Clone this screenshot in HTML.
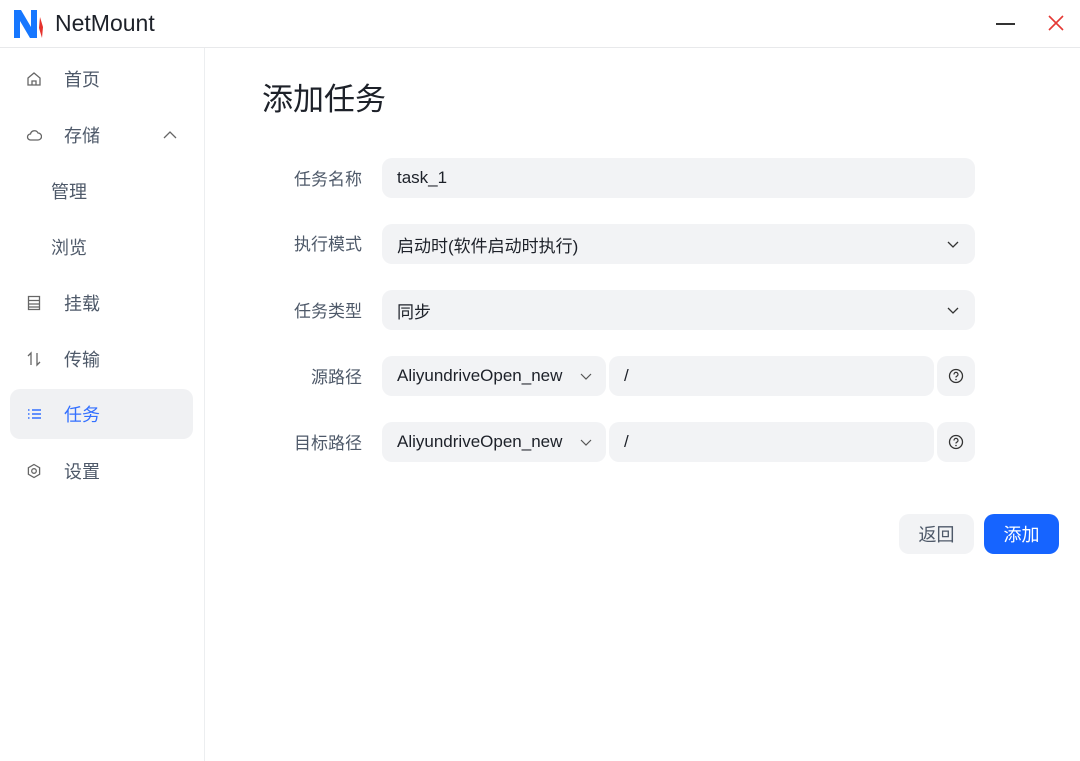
<!DOCTYPE html><html><head><meta charset="utf-8"><style>
*{box-sizing:border-box;margin:0;padding:0}
body{width:1080px;height:761px;background:#fff;font-family:"Liberation Sans","Noto Sans CJK SC",sans-serif;color:#1d2129;position:relative;overflow:hidden}
.hdr{position:absolute;left:0;top:0;width:1080px;height:48px;border-bottom:1px solid #e8e9eb}
.side{position:absolute;left:0;top:48px;width:205px;height:713px;border-right:1px solid #eceef0}
.it{position:absolute;left:10px;width:183px;height:50px;border-radius:10px;font-size:18px;color:#4e5969;display:flex;align-items:center}
.it .ic{position:absolute;left:16px;top:17px;width:16px;height:16px}
.it .t{position:absolute;left:54px}
.sel{background:#f0f1f3;color:#3370ff}
.lab{position:absolute;width:120px;left:242px;text-align:right;font-size:17px;color:#4e5969}
.box{position:absolute;height:40px;background:#f2f3f5;border-radius:10px;font-size:17px;display:flex;align-items:center;padding-left:15px;color:#1d2129}
.chev{position:absolute;right:16px;top:14px}
.btn{position:absolute;top:514px;width:75px;height:40px;border-radius:10px;font-size:18px;display:flex;align-items:center;justify-content:center}
</style></head><body>
<div class="hdr">
<svg style="position:absolute;left:13px;top:9px" width="34" height="30" viewBox="0 0 34 30"><path d="M1 1h7l10 17V1h6v28h-7L7 12v17H1z" fill="#1677ff"/><path d="M27 8l3 10-1 11-3-10z" fill="#e5322d"/></svg>
<div style="position:absolute;left:55px;top:10px;font-size:23px;color:#1d2129">NetMount</div>
<div style="position:absolute;left:996px;top:23px;width:19px;height:2px;background:#333"></div>
<svg style="position:absolute;left:1048px;top:15px" width="16" height="16"><path d="M1 1L15 15M15 1L1 15" stroke="#e53935" stroke-width="1.6"/></svg>
</div>
<div class="side">
<div class="it" style="top:6px"><svg class="ic" viewBox="0 0 16 16"><path d="M2 7l6-5 6 5v7H2z M6 14v-4h4v4" fill="none" stroke="#666" stroke-width="1.3"/></svg><span class="t">首页</span></div>
<div class="it" style="top:62px"><svg class="ic" viewBox="0 0 16 16"><path d="M4.5 13a3 3 0 0 1 0-6 4 4 0 0 1 7.5-1 3.5 3.5 0 0 1 0 7z" fill="none" stroke="#666" stroke-width="1.3"/></svg><span class="t">存储</span><svg style="position:absolute;left:153px;top:20px" width="14" height="9"><path d="M1 8l6-6 6 6" fill="none" stroke="#666" stroke-width="1.3"/></svg></div>
<div class="it" style="top:118px"><span class="t" style="left:41px">管理</span></div>
<div class="it" style="top:174px"><span class="t" style="left:41px">浏览</span></div>
<div class="it" style="top:230px"><svg class="ic" viewBox="0 0 16 16"><path d="M2.5 1.5h11v13h-11z M2.5 5.5h11 M2.5 9h11 M2.5 12h11" fill="none" stroke="#666" stroke-width="1.3"/></svg><span class="t">挂载</span></div>
<div class="it" style="top:286px"><svg class="ic" viewBox="0 0 16 16"><path d="M2 5l3-3v12 M11 2v12l3-3" fill="none" stroke="#666" stroke-width="1.3"/></svg><span class="t">传输</span></div>
<div class="it sel" style="top:341px"><svg class="ic" viewBox="0 0 16 16"><path d="M2 4h1.5M6 4h9M2 8h1.5M6 8h9M2 12h1.5M6 12h9" stroke="#3370ff" stroke-width="1.6"/></svg><span class="t">任务</span></div>
<div class="it" style="top:398px"><svg class="ic" viewBox="0 0 16 16"><circle cx="8" cy="8" r="2.3" fill="none" stroke="#666" stroke-width="1.3"/><path d="M8 1.5l5.6 3.25v6.5L8 14.5 2.4 11.25v-6.5z" fill="none" stroke="#666" stroke-width="1.3"/></svg><span class="t">设置</span></div>
</div>
<div style="position:absolute;left:262px;top:74px;font-size:31px;color:#1d2129">添加任务</div>
<div class="lab" style="top:165px">任务名称</div>
<div class="box" style="left:382px;top:158px;width:593px">task_1</div>
<div class="lab" style="top:230px">执行模式</div>
<div class="box" style="left:382px;top:224px;width:593px">启动时(软件启动时执行)<svg class="chev" width="12" height="12"><path d="M1 4l5 5 5-5" fill="none" stroke="#333" stroke-width="1.3"/></svg></div>
<div class="lab" style="top:297px">任务类型</div>
<div class="box" style="left:382px;top:290px;width:593px">同步<svg class="chev" width="12" height="12"><path d="M1 4l5 5 5-5" fill="none" stroke="#333" stroke-width="1.3"/></svg></div>
<div class="lab" style="top:363px">源路径</div>
<div class="box" style="left:382px;top:356px;width:224px">AliyundriveOpen_new<svg style="position:absolute;left:198px;top:16px" width="12" height="9"><path d="M1 2l5 5 5-5" fill="none" stroke="#555" stroke-width="1.2"/></svg></div>
<div class="box" style="left:609px;top:356px;width:325px">/</div>
<div class="box" style="left:937px;top:356px;width:38px;padding:0;justify-content:center"><svg width="16" height="16"><circle cx="8" cy="8" r="6.5" fill="none" stroke="#333" stroke-width="1.3"/><path d="M6 6.5a2 2 0 1 1 2.5 1.8c-.5.3-.5.7-.5 1.2" fill="none" stroke="#333" stroke-width="1.2"/><circle cx="8" cy="11.5" r=".8" fill="#333"/></svg></div>
<div class="lab" style="top:429px">目标路径</div>
<div class="box" style="left:382px;top:422px;width:224px">AliyundriveOpen_new<svg style="position:absolute;left:198px;top:16px" width="12" height="9"><path d="M1 2l5 5 5-5" fill="none" stroke="#555" stroke-width="1.2"/></svg></div>
<div class="box" style="left:609px;top:422px;width:325px">/</div>
<div class="box" style="left:937px;top:422px;width:38px;padding:0;justify-content:center"><svg width="16" height="16"><circle cx="8" cy="8" r="6.5" fill="none" stroke="#333" stroke-width="1.3"/><path d="M6 6.5a2 2 0 1 1 2.5 1.8c-.5.3-.5.7-.5 1.2" fill="none" stroke="#333" stroke-width="1.2"/><circle cx="8" cy="11.5" r=".8" fill="#333"/></svg></div>
<div class="btn" style="left:899px;background:#f2f3f5;color:#4e5969">返回</div>
<div class="btn" style="left:984px;background:#1664ff;color:#fff">添加</div>
</body></html>
